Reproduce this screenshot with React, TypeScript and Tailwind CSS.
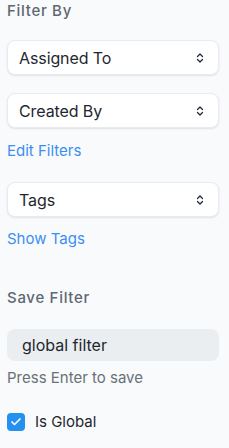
import { Check } from "lucide-react";

function Chevrons() {
  return (
    <svg width="10" height="14" viewBox="0 0 10 14" fill="none" className="text-gray-800">
      <path d="M2.5 5.5L5 3l2.5 2.5" stroke="currentColor" strokeWidth="1.3" strokeLinecap="round" strokeLinejoin="round" />
      <path d="M2.5 8.5L5 11l2.5-2.5" stroke="currentColor" strokeWidth="1.3" strokeLinecap="round" strokeLinejoin="round" />
    </svg>
  );
}

function SelectBox({ label }: { label: string }) {
  return (
    <div className="flex items-center justify-between h-[35px] w-[212px] pl-[11px] pr-[13px] bg-white rounded-lg border border-[#e9ecef] shadow-[0_1px_2px_rgba(0,0,0,0.1)]">
      <span className="text-[16px] text-[#1f272e] tracking-[-0.1px]">{label}</span>
      <Chevrons />
    </div>
  );
}

export default function App() {
  return (
    <div
      className="w-[229px] h-[448px] bg-[#f9fafb] px-[7px] pt-[1px]"
      style={{ fontFamily: "Inter, 'Noto Sans', sans-serif" }}
    >
      <div className="text-[15px] font-medium tracking-[0.7px] text-[#5d6873] leading-[20px]">Filter By</div>

      <div className="mt-[19px] flex flex-col gap-[18px]">
        <SelectBox label="Assigned To" />
        <SelectBox label="Created By" />
      </div>
      <div className="mt-[14px] text-[15px] text-[#3b8ff2] leading-[18px]">Edit Filters</div>

      <div className="mt-[22px]">
        <SelectBox label="Tags" />
      </div>
      <div className="mt-[13px] text-[15px] text-[#3b8ff2] leading-[18px]">Show Tags</div>

      <div className="mt-[40px] text-[15px] font-medium tracking-[0.7px] text-[#5d6873] leading-[20px]">Save Filter</div>
      <div className="mt-[21px] h-[32px] w-[212px] rounded-lg bg-[#ebeef0] flex items-center pl-[15px] text-[16px] text-[#1f272e]">
        global filter
      </div>
      <div className="mt-[8px] text-[15px] text-[#687178] leading-[18px]">Press Enter to save</div>

      <div className="mt-[24px] flex items-center gap-[10px]">
        <div className="w-[18px] h-[18px] rounded-[4px] bg-[#2490ef] flex items-center justify-center">
          <Check className="w-3 h-3 text-white" strokeWidth={3.5} />
        </div>
        <span className="text-[15px] text-[#1f272e]">Is Global</span>
      </div>
    </div>
  );
}
